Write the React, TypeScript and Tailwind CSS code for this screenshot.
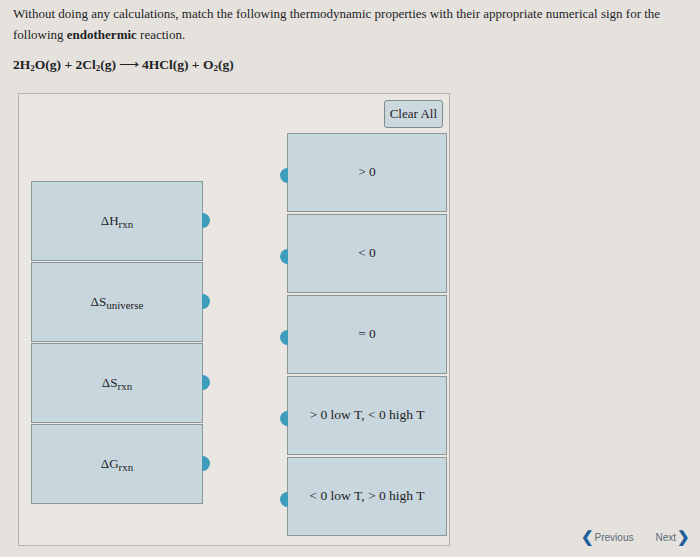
import React from "react";

const props = [
  { sym: "H", sub: "rxn" },
  { sym: "S", sub: "universe" },
  { sym: "S", sub: "rxn" },
  { sym: "G", sub: "rxn" },
];

const signs = ["> 0", "< 0", "= 0", "> 0 low T, < 0 high T", "< 0 low T, > 0 high T"];

function LeftBox({ sym, sub }: { sym: string; sub: string }) {
  return (
    <div className="relative flex h-[80px] w-[172px] items-center justify-center border border-[#8c979c] bg-[#c8d6dd]">
      <span className="text-[13px] text-[#1f2326]">
        Δ{sym}
        <sub className="text-[11px]">{sub}</sub>
      </span>
      <span className="absolute right-[-8px] top-[31px] h-[15px] w-[8px] rounded-r-full bg-[#3d9dbb]" />
    </div>
  );
}

function RightBox({ label }: { label: string }) {
  return (
    <div className="relative flex h-[79px] w-[160px] items-center justify-center border border-[#8c979c] bg-[#c8d6dd]">
      <span className="text-[13.5px] text-[#1f2326]">{label}</span>
      <span className="absolute left-[-8px] top-[34px] h-[15px] w-[8px] rounded-l-full bg-[#3d9dbb]" />
    </div>
  );
}

export default function App() {
  return (
    <div
      className="h-[557px] w-[700px] overflow-hidden bg-[#e5e2dd] text-[#1f2326]"
      style={{ fontFamily: '"Liberation Serif", "Times New Roman", serif' }}
    >
      <div className="px-[13px] pt-[3px]">
        <p className="w-[665px] text-[13px] leading-[21px]">
          Without doing any calculations, match the following thermodynamic properties with their appropriate numerical sign for the following{" "}
          <b>endothermic</b> reaction.
        </p>
        <p className="mt-[10px] text-[13.5px] font-bold leading-[20px]">
          2H<sub className="text-[9px]">2</sub>O(g) + 2Cl<sub className="text-[9px]">2</sub>(g)
          <span className="inline-block w-[26px] text-center font-normal">⟶</span>4HCl(g) + O<sub className="text-[9px]">2</sub>(g)
        </p>
      </div>

      <div className="ml-[18px] mt-[18px] flex h-[453px] w-[432px] flex-col border border-[#b5b3ae] bg-[#eae7e2] px-[6px] pt-[6px]">
        <div className="flex justify-end">
          <button className="rounded-[3px] border border-[#7f8a8f] bg-[#cbd8de] px-[5px] py-[3px] text-[13px] text-[#1f2326]">
            Clear All
          </button>
        </div>
        <div className="mt-[5px] flex items-start">
          <div className="ml-[6px] mt-[48px] flex flex-col gap-[1px]">
            {props.map((p, i) => (
              <LeftBox key={i} sym={p.sym} sub={p.sub} />
            ))}
          </div>
          <div className="ml-[84px] flex flex-col gap-[2px]">
            {signs.map((s) => (
              <RightBox key={s} label={s} />
            ))}
          </div>
        </div>
      </div>

      <div
        className="-mt-[20px] flex justify-end gap-[22px] pr-[10px] text-[10px] text-[#5a6a78]"
        style={{ fontFamily: '"Liberation Sans", Arial, sans-serif' }}
      >
        <span className="flex items-center gap-[1px]">
          <span className="text-[15px] font-bold text-[#1f5f9e]">❮</span>Previous
        </span>
        <span className="flex items-center gap-[1px]">
          Next<span className="text-[15px] font-bold text-[#1f5f9e]">❯</span>
        </span>
      </div>
    </div>
  );
}
